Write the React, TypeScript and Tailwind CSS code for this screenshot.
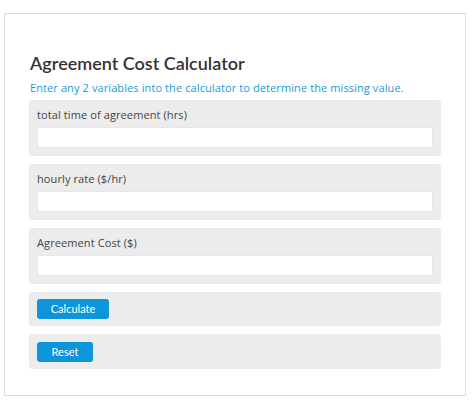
import React from "react";

const fields = [
  "total time of agreement (hrs)",
  "hourly rate ($/hr)",
  "Agreement Cost ($)",
];

export default function App() {
  return (
    <div className="w-[474px] h-[400px] bg-white pl-[4px] pt-[13px]">
      <div className="w-[462px] h-[383px] border border-[#dcdcdc] bg-white pl-[24px] pt-[38px]">
        <h1 className="font-['Lato',sans-serif] font-semibold text-[18px] leading-[22px] text-[#333] ml-px">
          Agreement Cost Calculator
        </h1>
        <p className="font-['Open_Sans',sans-serif] text-[11px] leading-[16px] text-[#1a9ad6] mt-[6px] ml-px tracking-[0.1px]">
          Enter any 2 variables into the calculator to determine the missing value.
        </p>
        <div className="mt-[4px] w-[412px] flex flex-col gap-[8px]">
          {fields.map((f) => (
            <div key={f} className="bg-[#ececec] rounded-[3px] px-[8px] pt-[7px] pb-[8px]">
              <label className="block font-['Open_Sans',sans-serif] text-[11px] leading-[16px] text-[#444] tracking-[0.1px]">
                {f}
              </label>
              <input
                type="text"
                className="mt-[4px] block w-[396px] h-[21px] bg-white border border-[#e6e6e6] outline-none"
              />
            </div>
          ))}
          <div className="bg-[#ececec] rounded-[3px] px-[8px] py-[7px]">
            <button className="block w-[72px] h-[20px] rounded-[3px] bg-[#0d95dc] text-white font-['Lato',sans-serif] text-[11px] leading-[20px]">
              Calculate
            </button>
          </div>
          <div className="bg-[#ececec] rounded-[3px] px-[8px] pt-[8px] pb-[7px]">
            <button className="block w-[56px] h-[20px] rounded-[3px] bg-[#0d95dc] text-white font-['Lato',sans-serif] text-[11px] leading-[20px]">
              Reset
            </button>
          </div>
        </div>
      </div>
    </div>
  );
}
